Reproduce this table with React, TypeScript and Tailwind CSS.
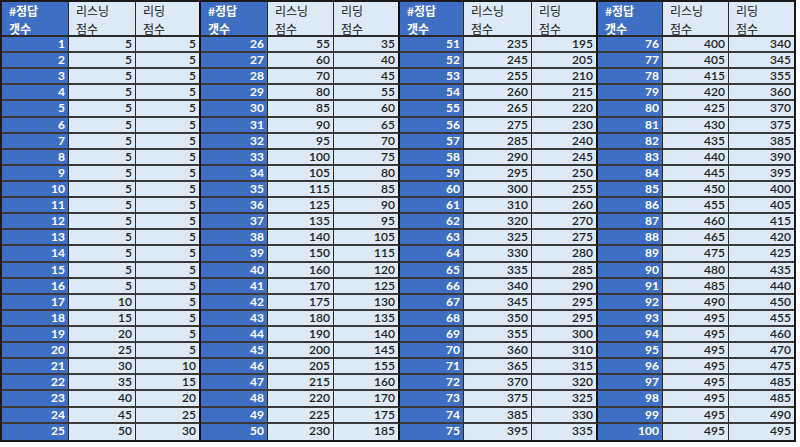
const groups: number[][][] = [
  [
    [1, 5, 5], [2, 5, 5], [3, 5, 5], [4, 5, 5], [5, 5, 5], [6, 5, 5], [7, 5, 5], [8, 5, 5], [9, 5, 5],
    [10, 5, 5], [11, 5, 5], [12, 5, 5], [13, 5, 5], [14, 5, 5], [15, 5, 5], [16, 5, 5], [17, 10, 5],
    [18, 15, 5], [19, 20, 5], [20, 25, 5], [21, 30, 10], [22, 35, 15], [23, 40, 20], [24, 45, 25], [25, 50, 30],
  ],
  [
    [26, 55, 35], [27, 60, 40], [28, 70, 45], [29, 80, 55], [30, 85, 60], [31, 90, 65], [32, 95, 70],
    [33, 100, 75], [34, 105, 80], [35, 115, 85], [36, 125, 90], [37, 135, 95], [38, 140, 105],
    [39, 150, 115], [40, 160, 120], [41, 170, 125], [42, 175, 130], [43, 180, 135], [44, 190, 140],
    [45, 200, 145], [46, 205, 155], [47, 215, 160], [48, 220, 170], [49, 225, 175], [50, 230, 185],
  ],
  [
    [51, 235, 195], [52, 245, 205], [53, 255, 210], [54, 260, 215], [55, 265, 220], [56, 275, 230],
    [57, 285, 240], [58, 290, 245], [59, 295, 250], [60, 300, 255], [61, 310, 260], [62, 320, 270],
    [63, 325, 275], [64, 330, 280], [65, 335, 285], [66, 340, 290], [67, 345, 295], [68, 350, 295],
    [69, 355, 300], [70, 360, 310], [71, 365, 315], [72, 370, 320], [73, 375, 325], [74, 385, 330], [75, 395, 335],
  ],
  [
    [76, 400, 340], [77, 405, 345], [78, 415, 355], [79, 420, 360], [80, 425, 370], [81, 430, 375],
    [82, 435, 385], [83, 440, 390], [84, 445, 395], [85, 450, 400], [86, 455, 405], [87, 460, 415],
    [88, 465, 420], [89, 475, 425], [90, 480, 435], [91, 485, 440], [92, 490, 450], [93, 495, 455],
    [94, 495, 460], [95, 495, 470], [96, 495, 475], [97, 495, 485], [98, 495, 485], [99, 495, 490], [100, 495, 495],
  ],
];

const font = { fontFamily: '"Noto Sans CJK KR", "Noto Sans", sans-serif' };
const num = { fontFamily: "Lato, sans-serif" };

const HeadCells = () => (
  <>
    <div className="bg-[#3f6fc3] text-white font-bold text-[12px] leading-[17.5px] pl-[7px] border-r border-b-2 border-[#2a2a2a]">
      <div>#정답</div>
      <div>갯수</div>
    </div>
    <div className="bg-[#dde9f5] text-[#1a1a1a] text-[12px] leading-[17.5px] pl-[7px] border-r border-b-2 border-[#2a2a2a]">
      <div>리스닝</div>
      <div>점수</div>
    </div>
  </>
);

export default function App() {
  return (
    <div className="w-[800px] h-[447px] bg-white overflow-hidden">
      <div
        className="w-[792px] grid grid-cols-[67px_67px_65px_67px_66px_66px_64px_68px_66px_65px_66px_65px] grid-rows-[35px_repeat(25,16.12px)] border-2 border-[#1a1a1a] box-content"
        style={font}
      >
        {groups.map((_, g) => (
          <div key={`h${g}`} className="contents">
            <HeadCells />
            <div
              className={`bg-[#dde9f5] text-[#1a1a1a] text-[12px] leading-[17.5px] pl-[7px] border-b-2 border-[#2a2a2a] ${
                g < 3 ? "border-r-2 border-r-[#111]" : ""
              }`}
            >
              <div>리딩</div>
              <div>점수</div>
            </div>
          </div>
        ))}
        {Array.from({ length: 25 }).map((_, r) =>
          groups.map((grp, g) => {
            const [n, l, rd] = grp[r];
            const bottom = r < 24 ? "border-b-2 border-b-[#3a3a3a]" : "";
            return (
              <div key={`${r}-${g}`} className="contents">
                <div
                  className={`bg-[#3f6fc3] text-white font-bold text-[12px] leading-[14px] text-right pr-[3px] border-r border-r-[#2a2a2a] ${bottom}`}
                  style={num}
                >
                  {n}
                </div>
                <div
                  className={`bg-[#dde9f5] text-[#222] font-semibold text-[12px] leading-[14px] text-right pr-[3px] border-r border-r-[#2a2a2a] ${bottom}`}
                  style={num}
                >
                  {l}
                </div>
                <div
                  className={`bg-[#dde9f5] text-[#222] font-semibold text-[12px] leading-[14px] text-right pr-[3px] ${bottom} ${
                    g < 3 ? "border-r-2 border-r-[#111]" : ""
                  }`}
                  style={num}
                >
                  {rd}
                </div>
              </div>
            );
          })
        )}
      </div>
    </div>
  );
}
